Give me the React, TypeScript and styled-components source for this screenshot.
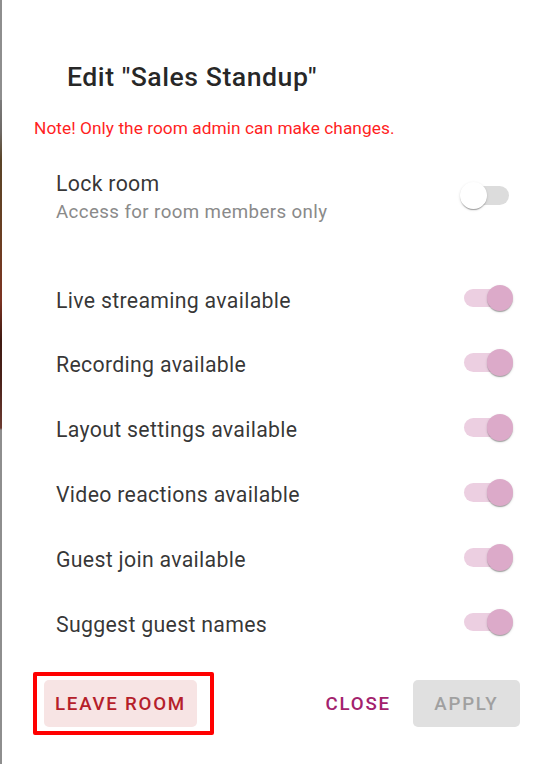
import React from "react";
import styled, { createGlobalStyle } from "styled-components";

const GlobalStyle = createGlobalStyle`
  html, body {
    margin: 0;
    padding: 0;
    background: #ffffff;
  }

  body {
    font-family: Roboto, "Noto Sans", "Liberation Sans", sans-serif;
  }
`;

const Page = styled.div`
  display: flex;
  height: 100vh;
  overflow: hidden;
`;

const Backdrop = styled.div`
  width: 2px;
  flex-shrink: 0;
  background: linear-gradient(
    to bottom,
    #8e8e8e 0px,
    #8e8e8e 100px,
    #7a7a7a 100px,
    #6e6a66 132px,
    #5a4427 160px,
    #6b3e22 240px,
    #7c3322 300px,
    #3f1a12 340px,
    #4a2119 380px,
    #6c3b31 428px,
    #8e8e8e 430px,
    #8e8e8e 100%
  );
`;

const Dialog = styled.section`
  flex: 1;
  display: flex;
  flex-direction: column;
  background: #ffffff;
  border-top-left-radius: 5px;
  border-bottom-left-radius: 5px;
  padding-top: 56px;
`;

const Title = styled.h2`
  margin: 0;
  padding-left: 65px;
  font-size: 26.7px;
  font-weight: 500;
  line-height: 43px;
  letter-spacing: 0.5px;
  color: rgba(0, 0, 0, 0.85);
`;

const Note = styled.p`
  margin: 16px 0 0;
  padding-left: 32px;
  font-size: 17.3px;
  line-height: 26px;
  letter-spacing: 0.05px;
  color: #ff1f1f;
`;

const Row = styled.div<{ $tall?: boolean }>`
  display: flex;
  align-items: center;
  justify-content: space-between;
  padding: 0 34px 0 54px;
  height: ${(p) => (p.$tall ? "56px" : "64.8px")};
`;

const LockRow = styled(Row)`
  margin-top: 26.6px;
  margin-bottom: 44.7px;
`;

const TextBlock = styled.div`
  display: flex;
  flex-direction: column;
`;

const Primary = styled.span`
  font-size: 21.3px;
  line-height: 32px;
  letter-spacing: 0.3px;
  color: rgba(0, 0, 0, 0.8);
`;

const Secondary = styled.span`
  font-size: 18.7px;
  line-height: 24px;
  letter-spacing: 0.4px;
  color: #8a8a8a;
`;

const SwitchRoot = styled.span<{ $lift?: boolean }>`
  position: relative;
  display: inline-block;
  width: 77px;
  height: 51px;
  flex-shrink: 0;
  margin-bottom: ${(p) => (p.$lift ? "5px" : "0")};
`;

const Track = styled.span<{ $on: boolean }>`
  position: absolute;
  left: 16px;
  top: 16px;
  width: 45.3px;
  height: 18.7px;
  border-radius: 9.4px;
  background: ${(p) => (p.$on ? "#eccfe1" : "#dcdcdc")};
`;

const Thumb = styled.span<{ $on: boolean }>`
  position: absolute;
  top: 12px;
  left: ${(p) => (p.$on ? "38.7px" : "12px")};
  width: 26.7px;
  height: 26.7px;
  border-radius: 50%;
  background: ${(p) => (p.$on ? "#dcaac9" : "#ffffff")};
  box-shadow: 0 2px 1px -1px rgba(0, 0, 0, 0.2), 0 1px 1px 0 rgba(0, 0, 0, 0.14),
    0 1px 3px 0 rgba(0, 0, 0, 0.12);
`;

const Actions = styled.div`
  display: flex;
  align-items: center;
  padding: 15px 39px 0 31px;
`;

const Highlight = styled.div`
  display: flex;
  border: 4px solid #ff0000;
  border-radius: 2px;
  padding: 4px 13px 4px 7px;
`;

const Button = styled.button<{ $kind: "danger" | "text" | "disabled" }>`
  height: 47px;
  border: none;
  border-radius: 5px;
  padding: 0 ${(p) => (p.$kind === "disabled" ? "21.5px" : "11px")};
  font-family: Roboto, "Noto Sans", "Liberation Sans", sans-serif;
  font-size: 18.7px;
  font-weight: 500;
  letter-spacing: 1.75px;
  text-transform: uppercase;
  cursor: pointer;
  background: ${(p) =>
    p.$kind === "danger" ? "#f7e4e4" : p.$kind === "disabled" ? "#e0e0e0" : "transparent"};
  color: ${(p) =>
    p.$kind === "danger" ? "#b5202a" : p.$kind === "disabled" ? "#a0a0a0" : "#a3226d"};
`;

const RightGroup = styled.div`
  margin-left: auto;
  display: flex;
  align-items: center;
  gap: 11px;
`;

function Switch({ on, lift }: { on: boolean; lift?: boolean }) {
  return (
    <SwitchRoot $lift={lift}>
      <Track $on={on} />
      <Thumb $on={on} />
    </SwitchRoot>
  );
}

const toggles = [
  "Live streaming available",
  "Recording available",
  "Layout settings available",
  "Video reactions available",
  "Guest join available",
  "Suggest guest names",
];

export default function App() {
  return (
    <>
      <GlobalStyle />
      <Page>
        <Backdrop />
        <Dialog>
          <Title>Edit "Sales Standup"</Title>
          <Note>Note! Only the room admin can make changes.</Note>

          <LockRow $tall>
            <TextBlock>
              <Primary>Lock room</Primary>
              <Secondary>Access for room members only</Secondary>
            </TextBlock>
            <Switch on={false} />
          </LockRow>

          {toggles.map((label) => (
            <Row key={label}>
              <Primary>{label}</Primary>
              <Switch on lift />
            </Row>
          ))}

          <Actions>
            <Highlight>
              <Button $kind="danger">Leave room</Button>
            </Highlight>
            <RightGroup>
              <Button $kind="text">Close</Button>
              <Button $kind="disabled" disabled>
                Apply
              </Button>
            </RightGroup>
          </Actions>
        </Dialog>
      </Page>
    </>
  );
}
